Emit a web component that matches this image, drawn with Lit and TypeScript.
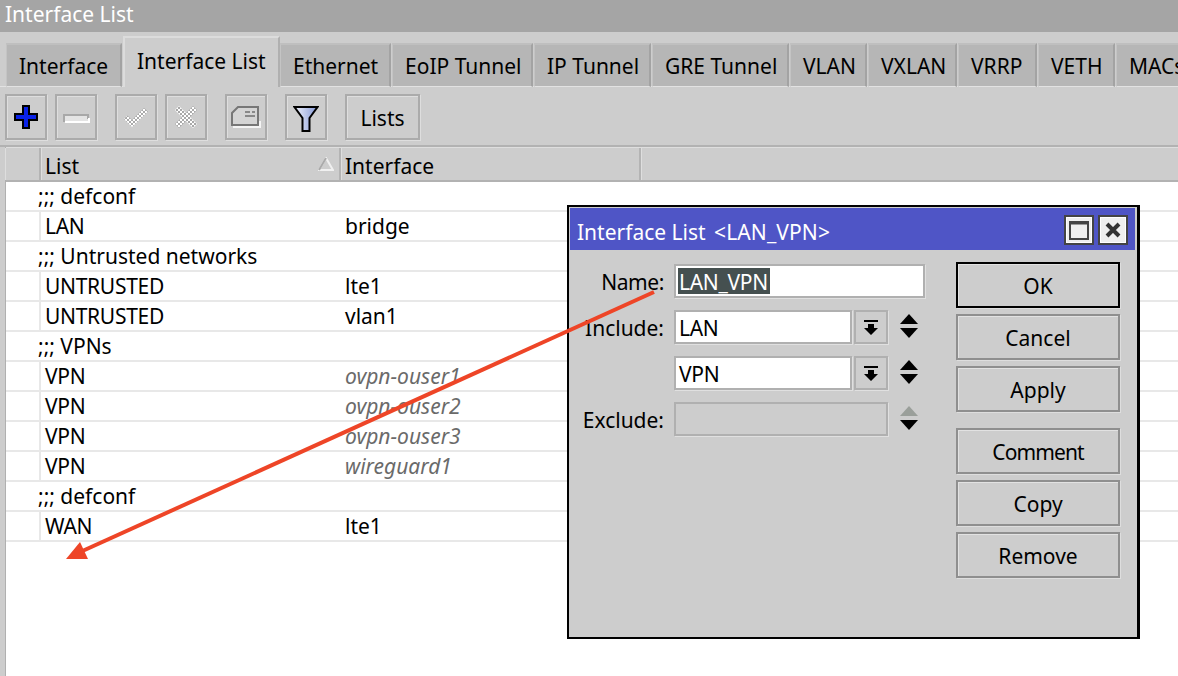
import { LitElement, html, css, svg } from "lit";
import { customElement } from "lit/decorators.js";

const tabs: [string, number][] = [
  ["Interface", 116], ["Interface List", 157], ["Ethernet", 111], ["EoIP Tunnel", 141], ["IP Tunnel", 117],
  ["GRE Tunnel", 137], ["VLAN", 77], ["VXLAN", 89], ["VRRP", 79], ["VETH", 77], ["MACsec", 100],
];
const rows: { list?: string; iface?: string; comment?: string; off?: boolean }[] = [
  { comment: ";;; defconf" },
  { list: "LAN", iface: "bridge" },
  { comment: ";;; Untrusted networks" },
  { list: "UNTRUSTED", iface: "lte1" },
  { list: "UNTRUSTED", iface: "vlan1" },
  { comment: ";;; VPNs" },
  { list: "VPN", iface: "ovpn-ouser1", off: true },
  { list: "VPN", iface: "ovpn-ouser2", off: true },
  { list: "VPN", iface: "ovpn-ouser3", off: true },
  { list: "VPN", iface: "wireguard1", off: true },
  { comment: ";;; defconf" },
  { list: "WAN", iface: "lte1" },
];

const updown = (dim = false) => html`<svg class="ud" width="20" height="24" viewBox="0 0 20 24">
  <path d="M10 0 19 10H1Z" fill=${dim ? "#9a9f9a" : "#000"} /><path d="M1 14H19L10 24Z" fill="#000" /></svg>`;
const dropIcon = html`<svg width="16" height="17" viewBox="0 0 16 17"><path d="M1 1H15V3H1ZM5 5H11V9H15L8 16 1 9H5Z" fill="#000"/></svg>`;

const icons = {
  plus: svg`<path d="M9 1H15V9H23V15H15V23H9V15H1V9H9Z" fill="#0a22e8" stroke="#000" stroke-width="2"/>`,
  minus: svg`<path d="M2 9H26V17H2Z" fill="#e4e4e4"/><path d="M2 17V10H26V14" fill="none" stroke="#a8a8a8" stroke-width="2"/><path d="M3 17H27V13" fill="none" stroke="#fff" stroke-width="2"/>`,
  check: svg`<defs><pattern id="dit" width="4" height="4" patternUnits="userSpaceOnUse"><rect width="4" height="4" fill="#a9a9a9"/><rect width="2" height="2" fill="#fff"/><rect x="2" y="2" width="2" height="2" fill="#fff"/></pattern></defs>
    <path d="M1 14 4.500 10.500 9 15 21 3 25 6.500 9 22Z" fill="url(#dit)"/>`,
  cross: svg`<path d="M1 5 5 1 12 8 19 1 23 5 16 12 23 19 19 23 12 16 5 23 1 19 8 12Z" fill="url(#dit)"/>`,
  note: svg`<path d="M7 2H27V20H1V8Z" fill="#d4d4d4" stroke="#777" stroke-width="2"/><path d="M14 7H19M21 7H24M14 11H24" stroke="#888" stroke-width="2"/><path d="M2 22H29V16" fill="none" stroke="#f4f4f4" stroke-width="2"/>`,
  filter: svg`<defs><linearGradient id="fg" x1="0" x2="1" y1="0" y2="0"><stop offset="0" stop-color="#f2f4fb"/><stop offset="1" stop-color="#8397d6"/></linearGradient></defs>
    <path d="M1.500 6H24.500L16.500 17V30H9.500V17Z" fill="url(#fg)" stroke="#000" stroke-width="2"/>`,
};

@customElement("app-root")
export class AppRoot extends LitElement {
  static styles = css`
    :host { display: flex; flex-direction: column; position: relative; width: 1178px; height: 676px; overflow: hidden; background: #fff;
      font-family: "Noto Sans", sans-serif; font-size: 21px; color: #000; line-height: 28px; }
    .title { flex: none; height: 32px; background: #a5a5a5; color: #fff; padding-left: 5px; line-height: 28px; white-space: nowrap; }
    .tabs { flex: none; height: 55px; background: #cdcdcd; display: flex; align-items: flex-end; padding-left: 6px; gap: 1px;
      box-sizing: border-box; overflow: hidden; box-shadow: inset 0 -1px 0 #e2e2e2; }
    .tab { flex: none; box-sizing: border-box; height: 44px; background: #b6b6b6; border-top: 2px solid #bfbfbf;
      border-left: 1px solid #c4c4c4; border-right: 2px solid #a3a3a3; border-bottom: 1px solid #e2e2e2;
      display: flex; align-items: center; padding-left: 12px; white-space: nowrap; padding-top: 1px; }
    .tab.on { height: 51px; background: #cdcdcd; border-top: 2px solid #dcdcdc; border-left: 2px solid #dcdcdc;
      border-right: 2px solid #b0b0b0; border-bottom: 0; padding: 0 0 3px 12px; margin: 0 -1px 0 0; }
    .toolbar { flex: none; height: 60px; box-sizing: border-box; background: #cdcdcd; display: flex; gap: 8px; padding: 7px 0 0 5px;
      border-bottom: 2px solid #b2b2b2; }
    .tb { box-sizing: border-box; width: 42px; height: 46px; border: 2px solid #ababab; box-shadow: 1px 1px 0 #dedede, inset 1px 1px 0 #dedede;
      display: flex; align-items: center; justify-content: center; }
    .tb.wide { width: 75px; padding-top: 2px; }
    .sp { margin-left: 10px; }
    .head, .row { display: grid; grid-template-columns: 36px 300px 300px 1fr; margin-left: 5px; }
    .head { height: 35px; box-sizing: border-box; background: #cdcdcd; border-top: 1px solid #dedede; border-bottom: 2px solid #b2b2b2; }
    .hc { box-sizing: border-box; height: 32px; border-right: 2px solid #b4b4b4; box-shadow: inset 1px 0 0 #dedede; padding: 4px 0 0 4px; line-height: 29px; position: relative; }
    .hc:first-child { padding: 0; }
    .hc:last-child { border: 0; }
    .sort { position: absolute; right: 5px; top: 9px; }
    .page { position: relative; flex: 1; min-height: 0; }
    .page::before { content: ""; position: absolute; left: 0; top: 0; bottom: 0; width: 6px; background: #cdcdcd; border-right: 1px solid #b0b0b0; box-sizing: border-box; }
    .row { height: 30px; box-sizing: border-box; border-bottom: 2px solid #e8e8e8; line-height: 28px; }
    .cell { padding-left: 4px; white-space: nowrap; overflow: hidden; letter-spacing: -0.3px; }
    .gut { border-right: 2px solid #e8e8e8; }
    .cell.second { padding-left: 4px; letter-spacing: 0; }
    .off { font-style: italic; color: #6a6a6a; }
    .comment { padding-left: 33px; height: 30px; box-sizing: border-box; border-bottom: 2px solid #e8e8e8; margin-left: 5px; }
    .dialog { position: absolute; left: 567px; top: 205px; width: 573px; height: 434px; box-sizing: border-box;
      border: 2px solid #000; background: #cdcdcd; border-right-width: 3px; padding: 1px 2px 0 1px; }
    .dtitle { height: 42px; box-sizing: border-box; background: #4f55c6; color: #fff; display: flex; align-items: center;
      padding: 0 7px 0 7px; justify-content: space-between; white-space: nowrap; }
    .dtitle span { padding-top: 6px; }
    .dtitle b { font-weight: 400; margin-left: 3px; letter-spacing: 0.1px; }
    .wbs { display: flex; gap: 4px; padding-top: 2px; }
    .wb { box-sizing: border-box; width: 30px; height: 30px; border: 2px solid #444; background: #efefef; box-shadow: inset 0 0 0 1px #fff;
      display: flex; align-items: center; justify-content: center; }
    .dbody { display: flex; padding: 12px 0 0 0; }
    .form { width: 355px; display: flex; flex-direction: column; gap: 12px; padding-top: 2px; }
    .fr { display: flex; height: 34px; align-items: center; }
    .lb { width: 94px; text-align: right; flex: none; padding-top: 2px; }
    .lb.nm { letter-spacing: -0.4px; }
    .input { margin-left: 10px; box-sizing: border-box; height: 34px; background: #fff; border: 2px solid #b0b0b0; box-shadow: 1px 1px 0 #e0e0e0;
      padding: 2px 0 0 3px; display: flex; align-items: center; line-height: 26px; letter-spacing: -0.3px; }
    .input.name { width: 251px; padding-top: 0; }
    .input.inc { width: 178px; }
    .input.dis { width: 214px; background: #cdcdcd; }
    .sel { background: #455050; color: #fff; padding-right: 2px; height: 26px; line-height: 28px; margin-left: -1px; padding-left: 1px; }
    .dd { box-sizing: border-box; margin-left: 2px; width: 34px; height: 34px; border: 2px solid #b0b0b0; box-shadow: 1px 1px 0 #e0e0e0; display: flex; align-items: center; justify-content: center; }
    .ud { margin: -2px 0 0 11px; flex: none; }
    .btns { width: 164px; margin-left: 31px; display: flex; flex-direction: column; gap: 6px; }
    .btn { box-sizing: border-box; height: 46px; border: 2px solid #8f8f8f; box-shadow: 1px 1px 0 #dedede, inset 1px 1px 0 #e2e2e2; display: flex; align-items: center; justify-content: center; padding-top: 2px; }
    .btn.def { border-color: #000; }
    .btn.tight { letter-spacing: -0.9px; }
    .gap { margin-top: 10px; }
    .arrow { position: absolute; left: 0; top: 0; pointer-events: none; }
  `;

  render() {
    return html`
      <div class="title">Interface List</div>
      <div class="tabs">
        ${tabs.map(([t, w], i) => html`<div class="tab ${i === 1 ? "on" : ""}" style="width:${w}px">${t}</div>`)}
      </div>
      <div class="toolbar">
        <div class="tb"><svg width="24" height="24" viewBox="0 0 24 24">${icons.plus}</svg></div>
        <div class="tb"><svg width="28" height="24" viewBox="0 0 28 24">${icons.minus}</svg></div>
        <div class="tb sp"><svg width="26" height="24" viewBox="0 0 26 24">${icons.check}</svg></div>
        <div class="tb"><svg width="24" height="24" viewBox="0 0 24 24">${icons.cross}</svg></div>
        <div class="tb sp"><svg width="30" height="24" viewBox="0 0 30 24">${icons.note}</svg></div>
        <div class="tb sp"><svg width="26" height="32" viewBox="0 0 26 32">${icons.filter}</svg></div>
        <div class="tb wide sp">Lists</div>
      </div>
      <div class="page">
        <div class="head">
          <div class="hc"></div>
          <div class="hc">List<svg class="sort" width="16" height="14" viewBox="0 0 16 14"><path d="M8 1 1 13H15Z" fill="none" stroke="#f0f0f0" stroke-width="2"/><path d="M8 1 1 13" stroke="#aaa" stroke-width="2"/></svg></div>
          <div class="hc">Interface</div>
          <div class="hc"></div>
        </div>
        ${rows.map((r) => r.comment
          ? html`<div class="comment">${r.comment}</div>`
          : html`<div class="row"><div class="gut"></div><div class="cell">${r.list}</div><div class="cell second ${r.off ? "off" : ""}">${r.iface}</div><div></div></div>`)}
      </div>
      <div class="dialog">
        <div class="dtitle"><span>Interface List <b>&lt;LAN_VPN&gt;</b></span>
          <div class="wbs">
            <div class="wb"><svg width="20" height="20" viewBox="0 0 20 20"><path d="M1 2H19V19H1Z" fill="#efefef" stroke="#444" stroke-width="2"/><path d="M1 3H19" stroke="#444" stroke-width="3"/></svg></div>
            <div class="wb"><svg width="16" height="16" viewBox="0 0 16 16"><path d="M2 2 14 14M14 2 2 14" stroke="#333" stroke-width="4"/></svg></div>
          </div>
        </div>
        <div class="dbody">
          <div class="form">
            <div class="fr"><div class="lb nm">Name:</div><div class="input name"><span class="sel">LAN_VPN</span></div></div>
            <div class="fr"><div class="lb">Include:</div><div class="input inc">LAN</div><div class="dd">${dropIcon}</div>${updown()}</div>
            <div class="fr"><div class="lb"></div><div class="input inc">VPN</div><div class="dd">${dropIcon}</div>${updown()}</div>
            <div class="fr"><div class="lb">Exclude:</div><div class="input dis"></div>${updown(true)}</div>
          </div>
          <div class="btns">
            <div class="btn def">OK</div><div class="btn">Cancel</div><div class="btn">Apply</div>
            <div class="btn gap tight">Comment</div><div class="btn">Copy</div><div class="btn">Remove</div>
          </div>
        </div>
      </div>
      <svg class="arrow" width="1178" height="676" viewBox="0 0 1178 676">
        <path d="M654 292 78 553" stroke="#ee4527" stroke-width="4" fill="none"/>
        <path d="M66 559 80 542 88 559Z" fill="#ee4527"/>
      </svg>
    `;
  }
}
